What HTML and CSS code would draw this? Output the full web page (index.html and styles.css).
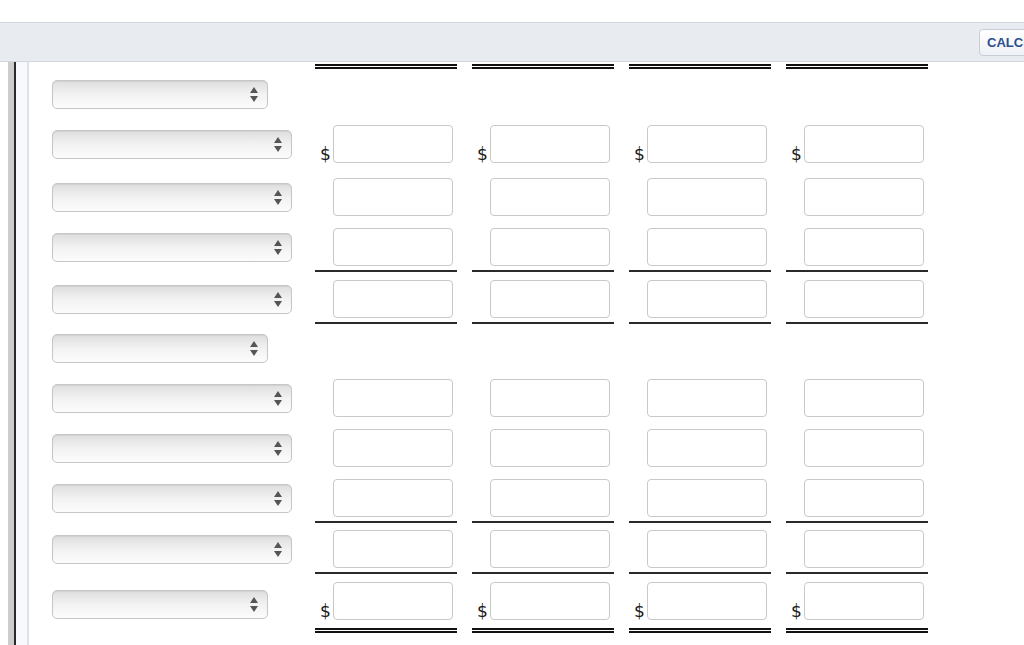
FILE: index.html
```html
<!DOCTYPE html>
<html>
<head>
<meta charset="utf-8">
<link rel="stylesheet" href="styles.css">
</head>
<body>
<div class="topstrip"></div>
<div class="toolbar"><button class="calc">CALC</button></div>
<div class="main">
  <div class="rail"></div>
  <div class="sheet">
    <div class="row r-head">
      <div class="selcell"><div class="sel short"><svg class="arr" viewBox="0 0 8 15" width="8" height="15"><path d="M0 6L4 0L8 6Z M0 9L8 9L4 15Z"/></svg></div></div>
      <div class="amt top"></div><div class="amt top"></div><div class="amt top"></div><div class="amt top"></div>
    </div>
    <div class="row r50">
      <div class="selcell"><div class="sel"><svg class="arr" viewBox="0 0 8 15" width="8" height="15"><path d="M0 6L4 0L8 6Z M0 9L8 9L4 15Z"/></svg></div></div>
      <div class="amt"><span class="dollar">$</span><input class="box"></div>
      <div class="amt"><span class="dollar">$</span><input class="box"></div>
      <div class="amt"><span class="dollar">$</span><input class="box"></div>
      <div class="amt"><span class="dollar">$</span><input class="box"></div>
    </div>
    <div class="row r53">
      <div class="selcell"><div class="sel"><svg class="arr" viewBox="0 0 8 15" width="8" height="15"><path d="M0 6L4 0L8 6Z M0 9L8 9L4 15Z"/></svg></div></div>
      <div class="amt"><input class="box"></div><div class="amt"><input class="box"></div><div class="amt"><input class="box"></div><div class="amt"><input class="box"></div>
    </div>
    <div class="row r50">
      <div class="selcell"><div class="sel"><svg class="arr" viewBox="0 0 8 15" width="8" height="15"><path d="M0 6L4 0L8 6Z M0 9L8 9L4 15Z"/></svg></div></div>
      <div class="amt line"><input class="box"></div><div class="amt line"><input class="box"></div><div class="amt line"><input class="box"></div><div class="amt line"><input class="box"></div>
    </div>
    <div class="row r52">
      <div class="selcell"><div class="sel"><svg class="arr" viewBox="0 0 8 15" width="8" height="15"><path d="M0 6L4 0L8 6Z M0 9L8 9L4 15Z"/></svg></div></div>
      <div class="amt line"><input class="box"></div><div class="amt line"><input class="box"></div><div class="amt line"><input class="box"></div><div class="amt line"><input class="box"></div>
    </div>
    <div class="row r49">
      <div class="selcell"><div class="sel short"><svg class="arr" viewBox="0 0 8 15" width="8" height="15"><path d="M0 6L4 0L8 6Z M0 9L8 9L4 15Z"/></svg></div></div>
    </div>
    <div class="row r50">
      <div class="selcell"><div class="sel"><svg class="arr" viewBox="0 0 8 15" width="8" height="15"><path d="M0 6L4 0L8 6Z M0 9L8 9L4 15Z"/></svg></div></div>
      <div class="amt"><input class="box"></div><div class="amt"><input class="box"></div><div class="amt"><input class="box"></div><div class="amt"><input class="box"></div>
    </div>
    <div class="row r50">
      <div class="selcell"><div class="sel"><svg class="arr" viewBox="0 0 8 15" width="8" height="15"><path d="M0 6L4 0L8 6Z M0 9L8 9L4 15Z"/></svg></div></div>
      <div class="amt"><input class="box"></div><div class="amt"><input class="box"></div><div class="amt"><input class="box"></div><div class="amt"><input class="box"></div>
    </div>
    <div class="row r50">
      <div class="selcell"><div class="sel"><svg class="arr" viewBox="0 0 8 15" width="8" height="15"><path d="M0 6L4 0L8 6Z M0 9L8 9L4 15Z"/></svg></div></div>
      <div class="amt line"><input class="box"></div><div class="amt line"><input class="box"></div><div class="amt line"><input class="box"></div><div class="amt line"><input class="box"></div>
    </div>
    <div class="row r51">
      <div class="selcell"><div class="sel"><svg class="arr" viewBox="0 0 8 15" width="8" height="15"><path d="M0 6L4 0L8 6Z M0 9L8 9L4 15Z"/></svg></div></div>
      <div class="amt line"><input class="box"></div><div class="amt line"><input class="box"></div><div class="amt line"><input class="box"></div><div class="amt line"><input class="box"></div>
    </div>
    <div class="row r59">
      <div class="selcell last"><div class="sel short"><svg class="arr" viewBox="0 0 8 15" width="8" height="15"><path d="M0 6L4 0L8 6Z M0 9L8 9L4 15Z"/></svg></div></div>
      <div class="amt total"><span class="dollar">$</span><input class="box"></div>
      <div class="amt total"><span class="dollar">$</span><input class="box"></div>
      <div class="amt total"><span class="dollar">$</span><input class="box"></div>
      <div class="amt total"><span class="dollar">$</span><input class="box"></div>
    </div>
  </div>
</div>
</body>
</html>
```
FILE: styles.css
```css
html, body {
  margin: 0;
  padding: 0;
  height: 100%;
  overflow: hidden;
  background: #ffffff;
  font-family: "Liberation Sans", Arial, sans-serif;
}
.topstrip {
  height: 22px;
}
.toolbar {
  height: 38px;
  background: #e8ebef;
  border-top: 1px solid #d3d8df;
  border-bottom: 1px solid #d3d8df;
  display: flex;
  align-items: center;
  padding-left: 979px;
  white-space: nowrap;
  overflow: hidden;
}
.calc {
  flex: none;
  width: 60px;
  height: 27px;
  padding: 0 0 0 7px;
  border: 1px solid #c9ced6;
  border-radius: 4px;
  background: linear-gradient(#ffffff, #eef1f5);
  color: #2d4e8e;
  font-family: "Liberation Sans", Arial, sans-serif;
  font-weight: bold;
  font-size: 13px;
  line-height: 25px;
  text-align: left;
}
.main {
  display: flex;
  height: calc(100vh - 62px);
}
.rail {
  flex: none;
  width: 13px;
  margin-left: 8px;
  border-left: 6px solid #cdcdcd;
  border-right: 2px solid #dde3ec;
  background: #f8f9fb;
  box-shadow: inset 2px 0 0 #2a2a2a;
}
.sheet {
  padding-left: 23px;
}
.row {
  display: flex;
  align-items: flex-end;
}
.r-head { height: 57px; align-items: stretch; }
.r49 { height: 49px; }
.r50 { height: 50px; }
.r51 { height: 51px; }
.r52 { height: 52px; }
.r53 { height: 53px; }
.r59 { height: 59px; }
.selcell {
  width: 263px;
  flex: none;
  display: flex;
  align-items: flex-end;
  padding-bottom: 10px;
  box-sizing: border-box;
  align-self: stretch;
}
.selcell.last {
  padding-bottom: 14px;
}
.sel {
  width: 240px;
  height: 29px;
  box-sizing: border-box;
  border: 1px solid #c6c6c6;
  border-radius: 5px;
  background: linear-gradient(#dedede, #f2f2f2 50%, #fcfcfc);
  box-shadow: inset 0 1px 1px rgba(0, 0, 0, 0.06);
  display: flex;
  align-items: center;
  justify-content: flex-end;
  padding-right: 9px;
}
.sel.short {
  width: 216px;
}
.arr {
  fill: #555555;
}
.amt {
  width: 142px;
  flex: none;
  margin-right: 15px;
  display: flex;
  align-items: flex-end;
  padding-left: 18px;
  padding-bottom: 4px;
  border-bottom: 2px solid transparent;
  box-sizing: border-box;
}
.amt.line {
  border-bottom-color: #2a2a2a;
}
.amt.top {
  margin-top: 2px;
  height: 5px;
  border-top: 5px double #111111;
  border-bottom: none;
  padding: 0;
}
.amt.total {
  padding-bottom: 8px;
  border-bottom: 5px double #111111;
}
.dollar {
  width: 18px;
  margin-left: -18px;
  padding-left: 5px;
  box-sizing: border-box;
  font-family: "DejaVu Sans", "Liberation Sans", sans-serif;
  font-size: 17px;
  line-height: 17px;
  color: #1a1a1a;
  margin-bottom: 0;
}
.box {
  width: 120px;
  height: 38px;
  box-sizing: border-box;
  border: 1px solid #c9c9c9;
  border-radius: 4px;
  background: #ffffff;
  margin: 0;
  padding: 0 6px;
  font-size: 14px;
  outline: none;
}
```
